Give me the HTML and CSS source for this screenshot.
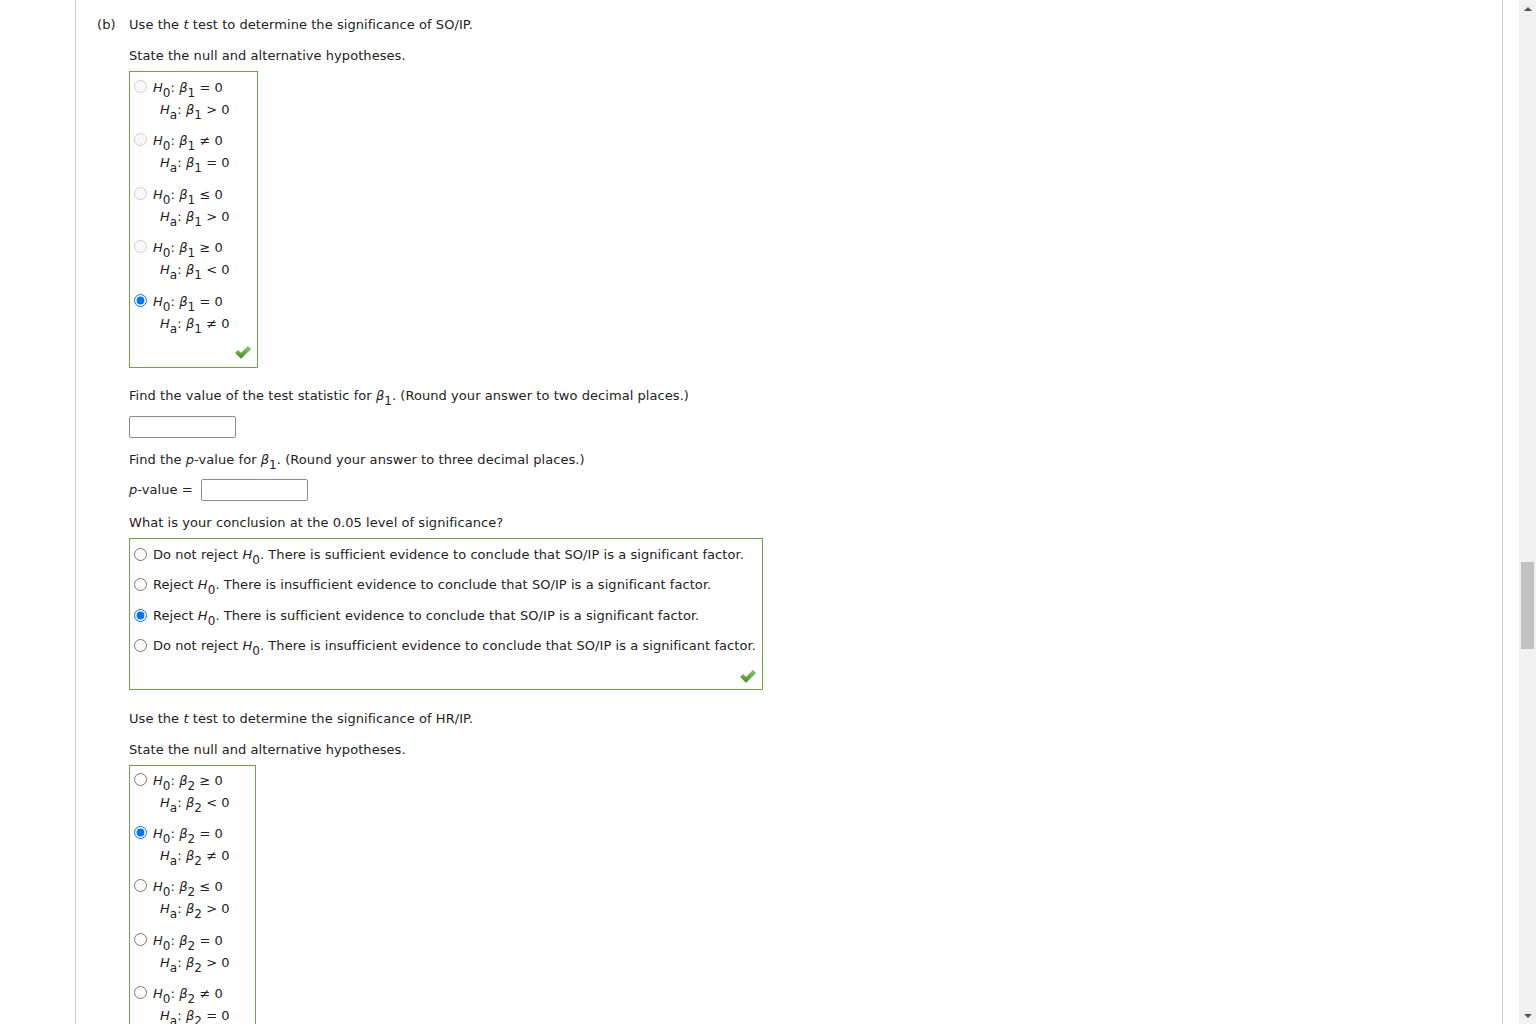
FILE: index.html
```html
<!DOCTYPE html>
<html>
<head>
<meta charset="utf-8">
<title>Regression t test</title>
<link rel="stylesheet" href="styles.css">
</head>
<body>
<div class="page">
  <div class="panel">
    <div class="question">
      <div class="qlabel">(b)</div>
      <div class="qbody">
        <p class="line">Use the <i>t</i> test to determine the significance of SO/IP.</p>
        <p class="line gap15">State the null and alternative hypotheses.</p>

        <div class="hbox box1">
          <label class="hopt">
            <input type="radio" name="h1" disabled>
            <span class="hyp">
              <span class="hl"><i>H</i><sub>0</sub>: <i>β</i><sub>1</sub> = 0</span>
              <span class="hl ha"><i>H</i><sub>a</sub>: <i>β</i><sub>1</sub> &gt; 0</span>
            </span>
          </label>
          <label class="hopt">
            <input type="radio" name="h1" disabled>
            <span class="hyp">
              <span class="hl"><i>H</i><sub>0</sub>: <i>β</i><sub>1</sub> ≠ 0</span>
              <span class="hl ha"><i>H</i><sub>a</sub>: <i>β</i><sub>1</sub> = 0</span>
            </span>
          </label>
          <label class="hopt">
            <input type="radio" name="h1" disabled>
            <span class="hyp">
              <span class="hl"><i>H</i><sub>0</sub>: <i>β</i><sub>1</sub> ≤ 0</span>
              <span class="hl ha"><i>H</i><sub>a</sub>: <i>β</i><sub>1</sub> &gt; 0</span>
            </span>
          </label>
          <label class="hopt">
            <input type="radio" name="h1" disabled>
            <span class="hyp">
              <span class="hl"><i>H</i><sub>0</sub>: <i>β</i><sub>1</sub> ≥ 0</span>
              <span class="hl ha"><i>H</i><sub>a</sub>: <i>β</i><sub>1</sub> &lt; 0</span>
            </span>
          </label>
          <label class="hopt">
            <input type="radio" name="h1b" checked>
            <span class="hyp">
              <span class="hl"><i>H</i><sub>0</sub>: <i>β</i><sub>1</sub> = 0</span>
              <span class="hl ha"><i>H</i><sub>a</sub>: <i>β</i><sub>1</sub> ≠ 0</span>
            </span>
          </label>
          <div class="checkrow">
            <svg class="check" width="16" height="13" viewBox="0 0 16 13">
              <defs>
                <linearGradient id="g1" x1="0" y1="0" x2="0" y2="1">
                  <stop offset="0" stop-color="#8fd16a"/>
                  <stop offset="1" stop-color="#3d8a1f"/>
                </linearGradient>
              </defs>
              <path d="M0.5 7 L3 4.5 L6 7.3 L13 0.5 L15.5 3 L6 12.5 Z" fill="url(#g1)" stroke="#4a8f2a" stroke-width="0.6"/>
            </svg>
          </div>
        </div>

        <p class="line gap19">Find the value of the test statistic for <i>β</i><sub>1</sub>. (Round your answer to two decimal places.)</p>
        <div class="inrow gap13"><input class="ans" type="text"></div>

        <p class="line gap13">Find the <i>p</i>-value for <i>β</i><sub>1</sub>. (Round your answer to three decimal places.)</p>
        <div class="inrow gap12"><span class="pl"><i>p</i>-value = </span><input class="ans" type="text"></div>

        <p class="line gap13">What is your conclusion at the 0.05 level of significance?</p>

        <div class="hbox box2">
          <label class="copt"><input type="radio" name="c1"><span>Do not reject <i>H</i><sub>0</sub>. There is sufficient evidence to conclude that SO/IP is a significant factor.</span></label>
          <label class="copt"><input type="radio" name="c1"><span>Reject <i>H</i><sub>0</sub>. There is insufficient evidence to conclude that SO/IP is a significant factor.</span></label>
          <label class="copt"><input type="radio" name="c1" checked><span>Reject <i>H</i><sub>0</sub>. There is sufficient evidence to conclude that SO/IP is a significant factor.</span></label>
          <label class="copt"><input type="radio" name="c1"><span>Do not reject <i>H</i><sub>0</sub>. There is insufficient evidence to conclude that SO/IP is a significant factor.</span></label>
          <div class="checkrow">
            <svg class="check" width="16" height="13" viewBox="0 0 16 13">
              <defs>
                <linearGradient id="g2" x1="0" y1="0" x2="0" y2="1">
                  <stop offset="0" stop-color="#8fd16a"/>
                  <stop offset="1" stop-color="#3d8a1f"/>
                </linearGradient>
              </defs>
              <path d="M0.5 7 L3 4.5 L6 7.3 L13 0.5 L15.5 3 L6 12.5 Z" fill="url(#g2)" stroke="#4a8f2a" stroke-width="0.6"/>
            </svg>
          </div>
        </div>

        <p class="line gap20">Use the <i>t</i> test to determine the significance of HR/IP.</p>
        <p class="line gap15">State the null and alternative hypotheses.</p>

        <div class="hbox box3">
          <label class="hopt">
            <input type="radio" name="h2">
            <span class="hyp">
              <span class="hl"><i>H</i><sub>0</sub>: <i>β</i><sub>2</sub> ≥ 0</span>
              <span class="hl ha"><i>H</i><sub>a</sub>: <i>β</i><sub>2</sub> &lt; 0</span>
            </span>
          </label>
          <label class="hopt">
            <input type="radio" name="h2" checked>
            <span class="hyp">
              <span class="hl"><i>H</i><sub>0</sub>: <i>β</i><sub>2</sub> = 0</span>
              <span class="hl ha"><i>H</i><sub>a</sub>: <i>β</i><sub>2</sub> ≠ 0</span>
            </span>
          </label>
          <label class="hopt">
            <input type="radio" name="h2">
            <span class="hyp">
              <span class="hl"><i>H</i><sub>0</sub>: <i>β</i><sub>2</sub> ≤ 0</span>
              <span class="hl ha"><i>H</i><sub>a</sub>: <i>β</i><sub>2</sub> &gt; 0</span>
            </span>
          </label>
          <label class="hopt">
            <input type="radio" name="h2">
            <span class="hyp">
              <span class="hl"><i>H</i><sub>0</sub>: <i>β</i><sub>2</sub> = 0</span>
              <span class="hl ha"><i>H</i><sub>a</sub>: <i>β</i><sub>2</sub> &gt; 0</span>
            </span>
          </label>
          <label class="hopt">
            <input type="radio" name="h2">
            <span class="hyp">
              <span class="hl"><i>H</i><sub>0</sub>: <i>β</i><sub>2</sub> ≠ 0</span>
              <span class="hl ha"><i>H</i><sub>a</sub>: <i>β</i><sub>2</sub> = 0</span>
            </span>
          </label>
        </div>
      </div>
    </div>
  </div>
  <div class="scrollbar">
    <div class="sbtn"><span class="tri up"></span></div>
    <div class="track"><div class="thumb"></div></div>
    <div class="sbtn"><span class="tri down"></span></div>
  </div>
</div>
</body>
</html>
```

FILE: styles.css
```css
html, body {
  margin: 0;
  padding: 0;
  background: #ffffff;
}
body {
  font-family: "DejaVu Sans", Verdana, sans-serif;
  font-size: 13px;
  letter-spacing: 0.06px;
  color: #222222;
  overflow: hidden;
}
.page {
  display: flex;
  width: 1536px;
  height: 1024px;
  overflow: hidden;
}
.panel {
  margin-left: 75px;
  width: 1428px;
  box-sizing: border-box;
  border-left: 1px solid #cfcfcf;
  border-right: 1px solid #cfcfcf;
  height: 1024px;
  overflow: hidden;
  flex: none;
}
.question {
  display: flex;
  padding-top: 16px;
  padding-left: 21px;
}
.qlabel {
  width: 32px;
  flex: none;
  padding-top: 2px;
  line-height: 14px;
}
.qbody {
  flex: 1;
}
.line {
  margin: 0;
  padding-top: 2px;
  line-height: 14px;
  white-space: nowrap;
}
i {
  font-style: italic;
}
sub {
  font-size: 12px;
  line-height: 0;
  vertical-align: -5px;
}
.gap12 { margin-top: 12px; }
.gap13 { margin-top: 13px; }
.gap15 { margin-top: 15px; }
.gap19 { margin-top: 19px; }
.gap20 { margin-top: 20px; }

.hbox {
  margin-top: 8px;
  border: 1px solid #6fa33f;
  box-sizing: border-box;
  padding: 4px 6px 8px 0;
}
.box1 { width: 129px; }
.box3 { width: 127px; padding-top: 3px; padding-bottom: 20px; }
.box2 {
  display: inline-block;
  padding-right: 6px;
  padding-bottom: 6px;
}
.hopt {
  display: flex;
  align-items: flex-start;
  margin-bottom: 9.4px;
}
.hopt:last-of-type {
  margin-bottom: 0;
}
input[type="radio"] {
  width: 13px;
  height: 13px;
  margin: 4px 6px 0 4px;
  flex: none;
}
.hyp {
  display: flex;
  flex-direction: column;
}
.hl {
  padding-top: 1px;
  line-height: 21px;
  height: 22px;
  box-sizing: border-box;
  white-space: nowrap;
}
.ha {
  padding-left: 7px;
}
.checkrow {
  display: flex;
  justify-content: flex-end;
  margin-top: 12px;
  height: 13px;
  align-items: center;
}
.box2 .checkrow {
  margin-top: 14px;
}
.check {
  display: block;
}
.copt {
  display: flex;
  align-items: flex-start;
  padding-top: 1px;
  box-sizing: border-box;
  line-height: 21px;
  height: 22px;
  margin-bottom: 8px;
  white-space: nowrap;
}
.copt:nth-child(2) { margin-bottom: 9px; }
.copt:last-of-type { margin-bottom: 0; }
.copt input[type="radio"] {
  margin-top: 4px;
}
.inrow {
  display: flex;
  align-items: center;
  height: 22px;
}
.pl {
  white-space: pre;
  margin-right: 4px;
}
.ans {
  width: 107px;
  height: 22px;
  box-sizing: border-box;
  border: 1px solid #8c8c8c;
  border-radius: 2px;
  padding: 1px 2px;
  margin: 0;
  font: inherit;
  background: #fff;
}

.scrollbar {
  margin-left: 16px;
  width: 17px;
  flex: none;
  height: 1024px;
  background: #f1f1f1;
  display: flex;
  flex-direction: column;
}
.sbtn {
  height: 17px;
  display: flex;
  align-items: center;
  justify-content: center;
  flex: none;
}
.track {
  flex: 1;
  padding-left: 2px;
}
.thumb {
  margin-top: 545px;
  width: 13px;
  height: 87px;
  background: #c1c1c1;
}
.tri {
  width: 0;
  height: 0;
  border-left: 4px solid transparent;
  border-right: 4px solid transparent;
}
.tri.up {
  border-bottom: 4px solid #505050;
}
.tri.down {
  border-top: 4px solid #505050;
}
```
